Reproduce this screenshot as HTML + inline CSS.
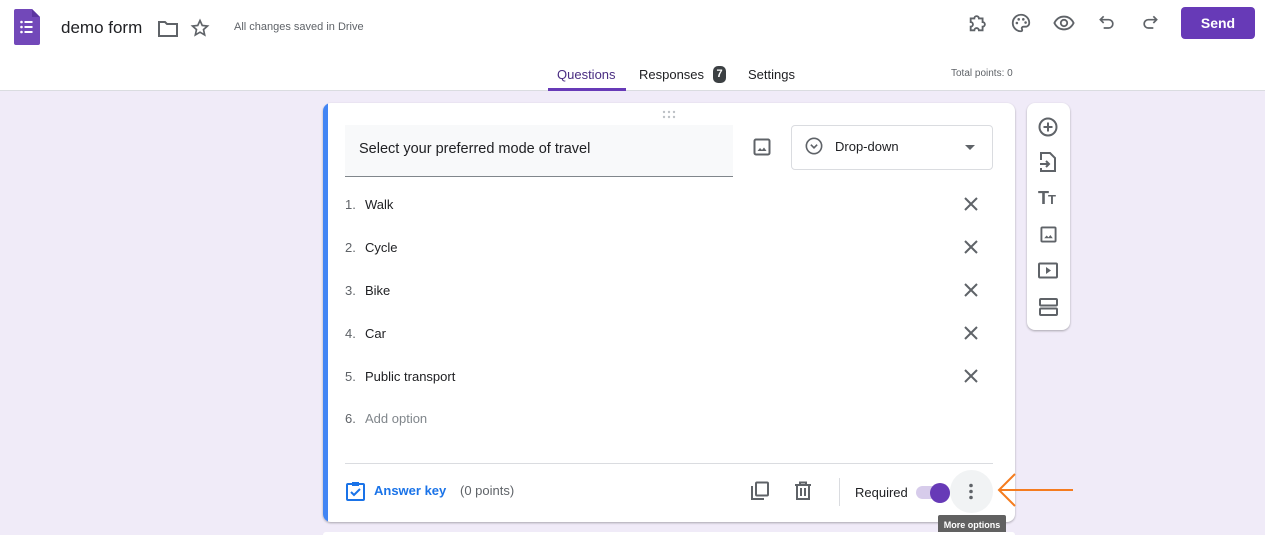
<!DOCTYPE html>
<html><head><meta charset="utf-8"><style>
*{box-sizing:border-box;margin:0;padding:0}
body{width:1265px;height:535px;background:#f0ebf8;font-family:"Liberation Sans",Arial,sans-serif;position:relative;overflow:hidden;color:#202124}
.a{position:absolute}
#hdr{left:0;top:0;width:1265px;height:91px;background:#fff;border-bottom:1px solid #dadce0}
svg{display:block}
.ic{stroke:#5f6368;fill:none;stroke-width:2}
.card{left:323px;top:103px;width:692px;height:419px;background:#fff;border-radius:8px;box-shadow:0 1px 2px rgba(0,0,0,.3);overflow:hidden}
.opt{left:345px;font-size:13px;color:#202124}
.opt span{display:inline-block;width:20px;color:#5f6368}
.x{left:963px}
</style></head><body>
<div id="hdr" class="a">
 <svg class="a" style="left:14px;top:9px" width="26" height="36" viewBox="0 0 26 36"><path d="M2 0h16l8 8v26a2 2 0 0 1-2 2H2a2 2 0 0 1-2-2V2a2 2 0 0 1 2-2z" fill="#7248b9"/><path d="M18 0v8h8z" fill="#5b35a0"/><g fill="#fff"><circle cx="7.5" cy="13" r="1.3"/><circle cx="7.5" cy="18" r="1.3"/><circle cx="7.5" cy="23" r="1.3"/><rect x="10.5" y="12" width="8" height="2"/><rect x="10.5" y="17" width="8" height="2"/><rect x="10.5" y="22" width="8" height="2"/></g></svg>
 <div class="a" style="left:61px;top:18px;font-size:17px;color:#202124">demo form</div>
 <svg class="a" style="left:158px;top:20px" width="20" height="17" viewBox="0 0 20 17"><path class="ic" d="M1 2h6l2 2h10v12H1z"/></svg>
 <svg class="a" style="left:190px;top:18px" width="20" height="20" viewBox="0 0 24 24"><path class="ic" d="M12 3l2.7 6 6.3.6-4.8 4.3 1.4 6.4L12 17l-5.6 3.3 1.4-6.4L3 9.6 9.3 9z"/></svg>
 <div class="a" style="left:234px;top:21px;font-size:11px;color:#5f6368">All changes saved in Drive</div>
 <svg class="a" style="left:967px;top:12px" width="22" height="22" viewBox="0 0 24 24"><path class="ic" d="M4 7h4a2.5 2.5 0 1 1 5 0h4v4a2.5 2.5 0 1 1 0 5v4h-4a2.5 2.5 0 1 0-5 0H4v-4a2.5 2.5 0 1 0 0-5z"/></svg>
 <svg class="a" style="left:1010px;top:12px" width="22" height="22" viewBox="0 0 24 24"><path class="ic" d="M12 3a9 9 0 0 0 0 18c1.5 0 1.5-1.5 1-2.5s0-2.5 2-2.5h2a4 4 0 0 0 4-4c0-5-4-9-9-9z"/><g fill="#5f6368"><circle cx="7.5" cy="12" r="1.4"/><circle cx="9.5" cy="8" r="1.4"/><circle cx="14.5" cy="8" r="1.4"/><circle cx="17" cy="11.5" r="1.4"/></g></svg>
 <svg class="a" style="left:1052px;top:12px" width="24" height="22" viewBox="0 0 24 24"><path class="ic" d="M1.5 12C4 7 8 5 12 5s8 2 10.5 7C20 17 16 19 12 19S4 17 1.5 12z"/><circle class="ic" cx="12" cy="12" r="3.5"/></svg>
 <svg class="a" style="left:1097px;top:13px" width="20" height="20" viewBox="0 0 24 24"><path class="ic" d="M8 4L4 8l4 4M4 8h10a5 5 0 0 1 0 10H8"/></svg>
 <svg class="a" style="left:1140px;top:13px" width="20" height="20" viewBox="0 0 24 24"><path class="ic" d="M16 4l4 4-4 4M20 8H10a5 5 0 0 0 0 10h6"/></svg>
 <div class="a" style="left:1181px;top:7px;width:74px;height:32px;background:#673ab7;border-radius:4px;color:#fff;font-size:14px;font-weight:bold;text-align:center;line-height:32px">Send</div>
 <div class="a" style="left:557px;top:67px;font-size:13px;color:#4a2d82">Questions</div>
 <div class="a" style="left:548px;top:88px;width:78px;height:3px;background:#673ab7"></div>
 <div class="a" style="left:639px;top:67px;font-size:13px;color:#202124">Responses</div>
 <div class="a" style="left:713px;top:66px;width:13px;height:17px;background:#3c4043;border-radius:5px;color:#fff;font-size:11px;font-weight:bold;text-align:center;line-height:17px">7</div>
 <div class="a" style="left:748px;top:67px;font-size:13px;color:#202124">Settings</div>
 <div class="a" style="left:951px;top:68px;font-size:10px;color:#5f6368">Total points: 0</div>
</div>

<div class="a card">
 <div class="a" style="left:0;top:0;width:5px;height:419px;background:#4285f4"></div>
 <svg class="a" style="left:339px;top:7px" width="14" height="9"><g fill="#bdc1c6"><circle cx="2" cy="2" r="1.2"/><circle cx="7" cy="2" r="1.2"/><circle cx="12" cy="2" r="1.2"/><circle cx="2" cy="7" r="1.2"/><circle cx="7" cy="7" r="1.2"/><circle cx="12" cy="7" r="1.2"/></g></svg>
 <div class="a" style="left:22px;top:22px;width:388px;height:52px;background:#f8f9fa;border-bottom:1px solid #80868b"></div>
 <div class="a" style="left:36px;top:38px;font-size:14.5px;color:#202124">Select your preferred mode of travel</div>
 <svg class="a" style="left:430px;top:35px" width="18" height="18" viewBox="0 0 18 18"><rect x="1.5" y="1.5" width="15" height="15" rx="1.5" fill="none" stroke="#5f6368" stroke-width="2"/><path d="M4.5 13l2.5-3 2 2 2-2.5 2.5 3.5z" fill="#5f6368"/></svg>
 <div class="a" style="left:468px;top:22px;width:202px;height:45px;border:1px solid #dadce0;border-radius:4px"></div>
 <svg class="a" style="left:482px;top:34px" width="18" height="18" viewBox="0 0 20 20"><circle cx="10" cy="10" r="8.5" fill="none" stroke="#5f6368" stroke-width="1.8"/><path d="M6.5 8.5L10 12l3.5-3.5" fill="none" stroke="#5f6368" stroke-width="1.8"/></svg>
 <div class="a" style="left:512px;top:36px;font-size:13px">Drop-down</div>
 <svg class="a" style="left:642px;top:42px" width="10" height="5"><path d="M0 0h10L5 5z" fill="#5f6368"/></svg>
</div>
<div class="a opt" style="top:197px"><span>1.</span>Walk</div>
<div class="a opt" style="top:240px"><span>2.</span>Cycle</div>
<div class="a opt" style="top:283px"><span>3.</span>Bike</div>
<div class="a opt" style="top:326px"><span>4.</span>Car</div>
<div class="a opt" style="top:369px"><span>5.</span>Public transport</div>
<div class="a opt" style="top:411px"><span>6.</span><b style="font-weight:normal;color:#80868b">Add option</b></div>
<svg class="a x" style="top:196px" width="16" height="16"><path d="M2 2l12 12M14 2L2 14" stroke="#5f6368" stroke-width="2"/></svg>
<svg class="a x" style="top:239px" width="16" height="16"><path d="M2 2l12 12M14 2L2 14" stroke="#5f6368" stroke-width="2"/></svg>
<svg class="a x" style="top:282px" width="16" height="16"><path d="M2 2l12 12M14 2L2 14" stroke="#5f6368" stroke-width="2"/></svg>
<svg class="a x" style="top:325px" width="16" height="16"><path d="M2 2l12 12M14 2L2 14" stroke="#5f6368" stroke-width="2"/></svg>
<svg class="a x" style="top:368px" width="16" height="16"><path d="M2 2l12 12M14 2L2 14" stroke="#5f6368" stroke-width="2"/></svg>
<div class="a" style="left:345px;top:463px;width:648px;height:1px;background:#dadce0"></div>
<svg class="a" style="left:346px;top:481px" width="19" height="20" viewBox="0 0 19 20"><rect x="1" y="3" width="17" height="16" rx="1" fill="none" stroke="#1a73e8" stroke-width="2"/><rect x="6" y="1" width="7" height="4" fill="#1a73e8"/><path d="M5 11l3 3 6-6" fill="none" stroke="#1a73e8" stroke-width="2"/></svg>
<div class="a" style="left:374px;top:483px;font-size:13px;color:#1a73e8;font-weight:bold">Answer key</div>
<div class="a" style="left:460px;top:483px;font-size:13px;color:#5f6368">(0 points)</div>
<svg class="a" style="left:750px;top:481px" width="20" height="20" viewBox="0 0 20 20"><rect x="6" y="1.5" width="12" height="13" rx="1" fill="none" stroke="#5f6368" stroke-width="2"/><path d="M2 5v13h12" fill="none" stroke="#5f6368" stroke-width="2"/></svg>
<svg class="a" style="left:794px;top:481px" width="18" height="20" viewBox="0 0 18 20"><path d="M1 4h16M6 4V1.5h6V4M3 4v14h12V4M7 7v8M11 7v8" fill="none" stroke="#5f6368" stroke-width="2"/></svg>
<div class="a" style="left:839px;top:478px;width:1px;height:28px;background:#dadce0"></div>
<div class="a" style="left:855px;top:485px;font-size:13px;color:#202124">Required</div>
<div class="a" style="left:916px;top:486px;width:34px;height:13px;border-radius:7px;background:#d7cceb"></div>
<div class="a" style="left:930px;top:483px;width:20px;height:20px;border-radius:50%;background:#673ab7"></div>
<div class="a" style="left:950px;top:470px;width:43px;height:43px;border-radius:50%;background:#f1f3f4"></div>
<svg class="a" style="left:968px;top:483px" width="6" height="17"><g fill="#5f6368"><circle cx="3" cy="2.5" r="1.8"/><circle cx="3" cy="8.5" r="1.8"/><circle cx="3" cy="14.5" r="1.8"/></g></svg>
<div class="a" style="left:938px;top:515px;width:68px;height:20px;background:#616161;border-radius:2px;color:#fff;font-size:9px;font-weight:bold;text-align:center;line-height:20px">More options</div>
<svg class="a" style="left:995px;top:472px" width="80" height="36"><path d="M78 18H4M20 2L4 18l16 16" fill="none" stroke="#f57c1f" stroke-width="2"/></svg>

<div class="a" style="left:1027px;top:103px;width:43px;height:227px;background:#fff;border-radius:8px;box-shadow:0 1px 2px rgba(0,0,0,.3)"></div>
<svg class="a" style="left:1038px;top:117px" width="20" height="20" viewBox="0 0 20 20"><circle cx="10" cy="10" r="8.5" class="ic"/><path d="M10 5.5v9M5.5 10h9" class="ic"/></svg>
<svg class="a" style="left:1040px;top:152px" width="16" height="20" viewBox="0 0 16 20"><path d="M1 8V1h9l5 5v13H1v-3" class="ic"/><path d="M0 12h9M6 9l3 3-3 3" class="ic"/></svg>
<div class="a" style="left:1038px;top:188px;font-size:18px;font-weight:bold;color:#5f6368;letter-spacing:-1px">T<span style="font-size:13px">T</span></div>
<svg class="a" style="left:1040px;top:226px" width="17" height="17" viewBox="0 0 18 18"><rect x="1.5" y="1.5" width="15" height="15" rx="1" class="ic"/><path d="M4.5 13l2.5-3 2 2 2-2.5 2.5 3.5z" fill="#5f6368"/></svg>
<svg class="a" style="left:1038px;top:262px" width="20" height="17" viewBox="0 0 20 17"><rect x="1" y="1.5" width="18" height="14" rx="1" class="ic"/><path d="M8 5v7l5-3.5z" fill="#5f6368"/></svg>
<svg class="a" style="left:1039px;top:298px" width="19" height="18" viewBox="0 0 19 18"><rect x="1" y="1" width="17" height="6.5" rx="1" class="ic"/><rect x="1" y="10.5" width="17" height="6.5" rx="1" class="ic"/></svg>
<div class="a" style="left:323px;top:532px;width:692px;height:3px;background:#fff;border-radius:8px 8px 0 0"></div>
</body></html>
